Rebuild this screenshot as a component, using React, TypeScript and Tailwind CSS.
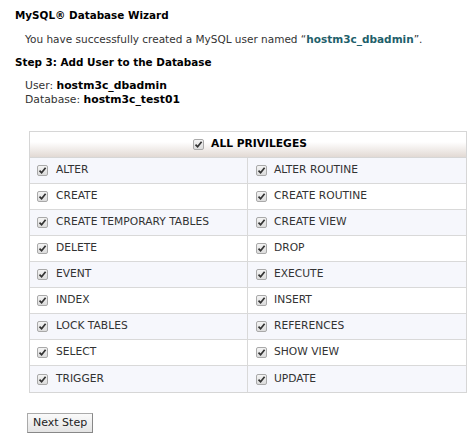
const privileges: [string, string][] = [
  ["ALTER", "ALTER ROUTINE"],
  ["CREATE", "CREATE ROUTINE"],
  ["CREATE TEMPORARY TABLES", "CREATE VIEW"],
  ["DELETE", "DROP"],
  ["EVENT", "EXECUTE"],
  ["INDEX", "INSERT"],
  ["LOCK TABLES", "REFERENCES"],
  ["SELECT", "SHOW VIEW"],
  ["TRIGGER", "UPDATE"],
];

function Check() {
  return (
    <span className="inline-flex h-[11px] w-[11px] shrink-0 items-center justify-center rounded-[2px] border border-[#a9a9a9] bg-gradient-to-b from-[#f4f4f4] to-[#dcdcdc]">
      <svg width="9" height="9" viewBox="0 0 9 9">
        <path d="M1.5 4.6 L3.6 6.8 L7.6 1.8" fill="none" stroke="#333" strokeWidth="1.7" />
      </svg>
    </span>
  );
}

export default function App() {
  return (
    <div className="min-h-[438px] bg-white text-[10.7px] text-[#333] font-['DejaVu_Sans',Verdana,sans-serif]">
      <div className="pl-[15px] pt-[8px]">
        <h1 className="text-[10.4px] font-bold text-black leading-[14px]">MySQL® Database Wizard</h1>
        <p className="mt-[10px] pl-[10px] text-[10.5px] leading-[14px]">
          You have successfully created a MySQL user named “<span className="font-bold text-[#1f5f6b]">hostm3c_dbadmin</span>”.
        </p>
        <h2 className="mt-[9px] text-[10.4px] font-bold text-black leading-[14px]">Step 3: Add User to the Database</h2>
        <div className="mt-[10px] pl-[10px] text-[10.8px] leading-[14px]">
          <div>
            User: <span className="font-bold text-black">hostm3c_dbadmin</span>
          </div>
          <div>
            Database: <span className="font-bold text-black">hostm3c_test01</span>
          </div>
        </div>
      </div>

      <div className="ml-[29px] mt-[24px] w-[438px] border border-[#d6d6d6]">
        <div className="flex h-[26px] items-center justify-center gap-[7px] border-b border-[#d6d6d6] bg-gradient-to-b from-white from-40% to-[#e2d9d4] pl-[4px] font-bold text-black">
          <Check />
          <span>ALL PRIVILEGES</span>
        </div>
        {privileges.map(([a, b], i) => (
          <div
            key={a}
            className={`flex h-[26px] ${i < privileges.length - 1 ? "border-b border-[#d9d9d9]" : ""} ${i % 2 === 0 ? "bg-[#f6f7fc]" : "bg-white"}`}
          >
            <div className="flex w-[218px] items-center gap-[8px] border-r border-[#d9d9d9] pl-[7px]">
              <Check />
              <span>{a}</span>
            </div>
            <div className="flex flex-1 items-center gap-[7px] pl-[8px]">
              <Check />
              <span>{b}</span>
            </div>
          </div>
        ))}
      </div>

      <div className="ml-[27px] mt-[20px]">
        <button className="h-[20px] border border-[#aaa] border-b-[#888] border-r-[#888] bg-gradient-to-b from-[#fafafa] to-[#e4e4e4] px-[5px] text-[11px] text-[#222] leading-[16px] font-['DejaVu_Sans',Verdana,sans-serif]">
          Next Step
        </button>
      </div>
    </div>
  );
}
